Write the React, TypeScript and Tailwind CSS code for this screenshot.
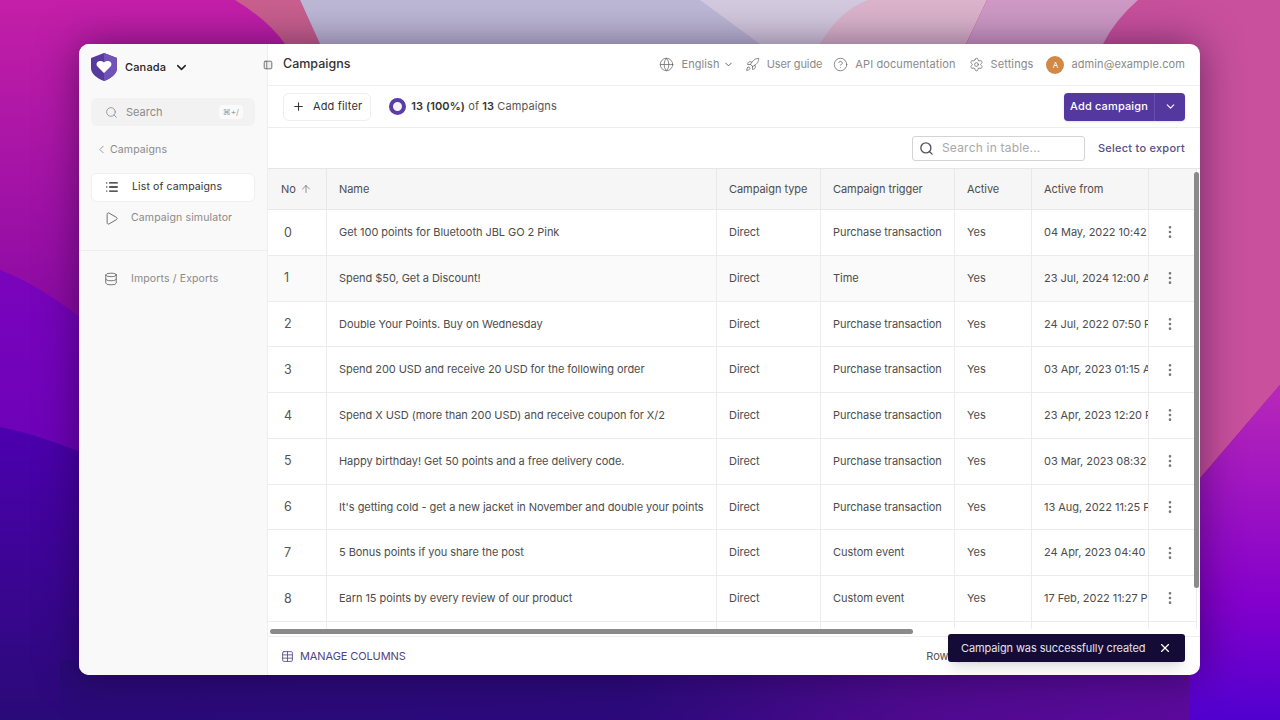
import type { ReactNode } from 'react';
import { ArrowUp, ChevronDown, ChevronLeft, CircleHelp, Database, EllipsisVertical, Globe, List, PanelLeft, Play, Plus, Rocket, Search, Settings, Table, X } from 'lucide-react';

const rows = [
  ['0', 'Get 100 points for Bluetooth JBL GO 2 Pink', 'Purchase transaction', '04 May, 2022 10:42 AM'],
  ['1', 'Spend $50, Get a Discount!', 'Time', '23 Jul, 2024 12:00 AM'],
  ['2', 'Double Your Points. Buy on Wednesday', 'Purchase transaction', '24 Jul, 2022 07:50 PM'],
  ['3', 'Spend 200 USD and receive 20 USD for the following order', 'Purchase transaction', '03 Apr, 2023 01:15 AM'],
  ['4', 'Spend X USD (more than 200 USD) and receive coupon for X/2', 'Purchase transaction', '23 Apr, 2023 12:20 PM'],
  ['5', 'Happy birthday! Get 50 points and a free delivery code.', 'Purchase transaction', '03 Mar, 2023 08:32 PM'],
  ['6', "It's getting cold - get a new jacket in November and double your points", 'Purchase transaction', '13 Aug, 2022 11:25 PM'],
  ['7', '5 Bonus points if you share the post', 'Custom event', '24 Apr, 2023 04:40 PM'],
  ['8', 'Earn 15 points by every review of our product', 'Custom event', '17 Feb, 2022 11:27 PM'],
];

function Wallpaper() {
  return (
    <svg className="absolute inset-0 h-full w-full" viewBox="0 0 1280 720" preserveAspectRatio="none">
      <defs>
        <linearGradient id="top" gradientUnits="userSpaceOnUse" x1="0" y1="0" x2="0" y2="320">
          <stop offset="0" stopColor="#c41fa8" />
          <stop offset="1" stopColor="#8a0aa4" />
        </linearGradient>
        <linearGradient id="mid" gradientUnits="userSpaceOnUse" x1="0" y1="270" x2="0" y2="460">
          <stop offset="0" stopColor="#7a04bc" />
          <stop offset="1" stopColor="#6c02b8" />
        </linearGradient>
        <linearGradient id="low" gradientUnits="userSpaceOnUse" x1="0" y1="430" x2="0" y2="720">
          <stop offset="0" stopColor="#4c00ae" />
          <stop offset="1" stopColor="#2a0a78" />
        </linearGradient>
        <linearGradient id="rightLow" x1="0" y1="0" x2="0" y2="1">
          <stop offset="0" stopColor="#b828b8" />
          <stop offset="0.65" stopColor="#8400cc" />
          <stop offset="1" stopColor="#5000d0" />
        </linearGradient>
        <linearGradient id="bottom" x1="0" y1="0" x2="1" y2="0">
          <stop offset="0" stopColor="#2a0a78" />
          <stop offset="0.5" stopColor="#2c0a7c" />
          <stop offset="0.75" stopColor="#4f0a90" />
          <stop offset="1" stopColor="#5c0a9c" />
        </linearGradient>
      </defs>
      <rect width="1280" height="720" fill="url(#top)" />
      <path d="M0 270 Q40 285 90 325 L700 720 H0 Z" fill="url(#mid)" />
      <path d="M0 427 Q40 435 90 456 L700 720 H0 Z" fill="url(#low)" />
      <rect x="60" y="660" width="1140" height="60" fill="url(#bottom)" />
      <path d="M1100 0 H1280 V385 L1190 490 H1100 Z" fill="#c8509c" />
      <path d="M1190 490 L1280 385 V720 H1190 Z" fill="url(#rightLow)" />
      <path d="M235 0 Q268 20 285 44 H320 L300 0 Z" fill="#c95f8e" />
      <path d="M300 0 H870 L820 44 H320 Z" fill="#bdb8d6" />
      <path d="M700 0 H870 L820 44 H760 Z" fill="#d4cadf" />
      <path d="M868 0 H987 L966 44 H820 Q840 10 868 0 Z" fill="#dcb4cc" />
      <path d="M987 0 H1138 Q1115 20 1103 44 H966 Z" fill="#cf9ac6" />
    </svg>
  );
}

function Shield() {
  return (
    <svg width="26" height="28" viewBox="0 0 26 28">
      <path d="M13 0 L26 5 V15 C26 21 20 25.500 13 28 C6 25.500 0 21 0 15 V5 Z" fill="#563a9e" />
      <path d="M13 0 L26 5 V15 C26 21 20 25.500 13 28 Z" fill="#7052b8" />
      <path d="M13 20 L6 13 C4 9 9 6 13 9.500 C17 6 22 9 20 13 Z" fill="#fff" />
    </svg>
  );
}

function Sidebar() {
  return (
    <aside className="flex w-[189px] shrink-0 flex-col border-r border-[#eeeeee] bg-[#f9f9f9]">
      <div className="flex h-[46px] items-center gap-[8px] pl-[12px]">
        <Shield />
        <span className="text-[11px] font-medium tracking-[0.15px] text-[#222222]">Canada</span>
        <ChevronDown size={15} strokeWidth={2.4} className="text-[#222222]" />
      </div>
      <div className="mx-3 mt-2 flex h-[28px] items-center rounded-md bg-[#f2f2f2] pl-[14px] pr-[12px] text-[#8a8a8a]">
        <Search size={13} strokeWidth={1.5} />
        <span className="ml-[8px] text-[11px]">Search</span>
        <span className="ml-auto rounded-sm bg-[#fafafa] px-[4px] py-[1px] text-[8px] text-[#9a9a9a]">⌘+/</span>
      </div>
      <div className="ml-[16px] mt-[16px] flex items-center gap-[2px] text-[#8a8a8a]">
        <ChevronLeft size={13} strokeWidth={1.6} />
        <span className="text-[10.5px] tracking-[0.13px]">Campaigns</span>
      </div>
      <div className="mx-3 mt-[15px] flex h-[29px] items-center gap-[13px] rounded-md border border-[#f0f0f0] bg-white pl-[13px]">
        <List size={14} strokeWidth={2.4} className="text-[#222222]" />
        <span className="text-[10.5px] tracking-[0.13px] text-[#333333]">List of campaigns</span>
      </div>
      <div className="mx-3 mt-[2px] flex h-[29px] items-center gap-[13px] pl-[13px] text-[#8a8a8a]">
        <Play size={15} strokeWidth={1.5} className="text-[#666666]" />
        <span className="-ml-[1px] text-[10.5px] tracking-[0.13px]">Campaign simulator</span>
      </div>
      <div className="mt-[17px] border-t border-[#eeeeee]" />
      <div className="mx-3 mt-[14px] flex h-[29px] items-center gap-[13px] pl-[13px] text-[#8a8a8a]">
        <Database size={14} strokeWidth={1.5} className="text-[#666666]" />
        <span className="text-[10.5px] tracking-[0.13px]">Imports / Exports</span>
      </div>
    </aside>
  );
}

function TopLink({ icon, label, className }: { icon: ReactNode; label: string; className?: string }) {
  return (
    <div className={`flex items-center gap-[7px] ${className ?? ''}`}>
      {icon}
      <span>{label}</span>
    </div>
  );
}

function TopBar() {
  return (
    <div className="flex h-[42px] shrink-0 items-center border-b border-[#eeeeee] pr-[15px]">
      <PanelLeft size={10} className="-ml-[5px] rounded-sm bg-[#eeeeee] text-[#666666]" />
      <span className="ml-[10px] text-[12.5px] font-medium text-[#333333]">Campaigns</span>
      <div className="ml-auto flex items-center gap-[13px] text-[11px] tracking-[0.1px] text-[#8a8a8a]">
        <div className="flex items-center gap-[7px]">
          <Globe size={15} strokeWidth={1.2} className="text-[#666666]" />
          <span>English</span>
          <ChevronDown size={11} className="-ml-[4px] text-[#555555]" />
        </div>
        <TopLink className="-ml-[2px] tracking-[-0.1px]" icon={<Rocket size={15} strokeWidth={1.2} className="text-[#666666]" />} label="User guide" />
        <TopLink className="-ml-[2px]" icon={<CircleHelp size={15} strokeWidth={1.2} className="text-[#666666]" />} label="API documentation" />
        <TopLink icon={<Settings size={15} strokeWidth={1.2} className="text-[#666666]" />} label="Settings" />
        <div className="flex items-center gap-[7px]">
          <span className="flex h-[18px] w-[18px] items-center justify-center rounded-full bg-[#d08a45] text-[8px] text-white">A</span>
          <span>admin@example.com</span>
        </div>
      </div>
    </div>
  );
}

function FilterBar() {
  return (
    <div className="flex h-[42px] shrink-0 items-center border-b border-[#eeeeee] pl-[15px] pr-[15px]">
      <button className="flex h-[28px] items-center gap-[8px] rounded-md border border-[#eeeeee] bg-white pl-[8px] pr-[8px] text-[11px] tracking-[0.15px] text-[#333333]">
        <Plus size={13} strokeWidth={2} />
        Add filter
      </button>
      <span className="ml-[18px] h-[17px] w-[17px] rounded-full border-[4px] border-[#5b3da6] bg-[#f4f2fa]" />
      <span className="ml-[5px] text-[11px] tracking-[0.1px] text-[#555555]">
        <b className="font-semibold text-[#333333]">13 (100%)</b> of <b className="font-semibold text-[#333333]">13</b> Campaigns
      </span>
      <div className="ml-auto flex h-[28px] items-center rounded-[4px] bg-[#55389f] text-[11px] font-medium tracking-[0.15px] text-white shadow-sm">
        <span className="flex h-full items-center border-r border-[#6a4fb0] px-[6px]">Add campaign</span>
        <span className="flex h-full w-[30px] items-center justify-center">
          <ChevronDown size={13} strokeWidth={2} />
        </span>
      </div>
    </div>
  );
}

function SearchBar() {
  return (
    <div className="flex h-[41px] shrink-0 items-center justify-end gap-[13px] border-b border-[#e6e6e6] pr-[15px]">
      <div className="flex h-[25px] w-[173px] items-center gap-[8px] rounded-[3px] border border-[#d4d4d4] pl-[6px] text-[12px] tracking-[0.2px] text-[#a8a8a8]">
        <Search size={15} strokeWidth={2.2} className="text-[#555555]" />
        Search in table...
      </div>
      <span className="text-[11px] font-medium tracking-[0.25px] text-[#5a4d8a]">Select to export</span>
    </div>
  );
}

function CampaignTable() {
  return (
    <div className="relative min-h-0 flex-1 overflow-hidden">
      <div className="grid grid-cols-[59px_390px_104px_134px_77px_117px_48px] text-[11px] tracking-[-0.05px] text-[#4d4d4d]">
        <div className="flex h-[41px] items-center gap-[4px] border-b border-r border-[#e8e8e8] bg-[#f6f6f6] pl-[13px]">
          No <ArrowUp size={12} strokeWidth={1.2} />
        </div>
        {['Name', 'Campaign type', 'Campaign trigger', 'Active', 'Active from', ''].map((h) => (
          <div key={h} className="flex h-[41px] items-center border-b border-r border-[#e8e8e8] bg-[#f6f6f6] pl-[12px]">
            {h}
          </div>
        ))}
        {rows.map((r, i) => {
          const bg = i === 1 ? 'bg-[#fafafa]' : 'bg-white';
          const cell = `flex h-[45.75px] items-center overflow-hidden whitespace-nowrap border-b border-r border-[#ececec] pl-[12px] ${bg}`;
          return [
            <div key={`${i}no`} className={`${cell} !pl-[16px] pt-[1px] text-[12.5px] text-[#555555]`}>{r[0]}</div>,
            <div key={`${i}name`} className={cell}>{r[1]}</div>,
            <div key={`${i}type`} className={cell}>Direct</div>,
            <div key={`${i}trigger`} className={cell}>{r[2]}</div>,
            <div key={`${i}active`} className={cell}>Yes</div>,
            <div key={`${i}from`} className={cell}>{r[3]}</div>,
            <div key={`${i}menu`} className={`${cell} !pl-[13px]`}><EllipsisVertical size={16} strokeWidth={2} className="text-[#777777]" /></div>,
          ];
        })}
        {['a', 'b', 'c', 'd', 'e', 'f', 'g'].map((k) => (
          <div key={k} className="h-[20px] border-r border-[#ececec]" />
        ))}
      </div>
      <div className="absolute right-[1px] top-[3px] h-[416px] w-[5px] rounded-full bg-[#8a8a8a]" />
      <div className="absolute inset-x-0 bottom-0 h-[7px] bg-white" />
      <div className="absolute bottom-[2px] left-[2px] h-[5px] w-[643px] rounded-full bg-[#8a8a8a]" />
    </div>
  );
}

function Toast() {
  return (
    <div className="absolute bottom-[13px] right-[15px] flex h-[28px] w-[237px] items-center justify-between whitespace-nowrap rounded-[3px] bg-[#140b36] pl-[13px] pr-[13px] text-[11px] tracking-[-0.1px] text-[#e4e2ee] shadow-lg">
      Campaign was successfully created
      <X size={14} strokeWidth={2} className="text-white" />
    </div>
  );
}

export default function App() {
  return (
    <div className="relative h-[720px] w-[1280px] overflow-hidden pl-[79px] pt-[44px]" style={{ fontFamily: 'Inter, sans-serif' }}>
      <Wallpaper />
      <div className="relative flex h-[631px] w-[1121px] rounded-[10px] bg-white shadow-[0_0_40px_rgba(20,0,40,0.5)]">
        <div className="flex w-full overflow-hidden rounded-[10px]">
          <Sidebar />
          <main className="relative flex min-w-0 flex-1 flex-col">
            <TopBar />
            <FilterBar />
            <SearchBar />
            <CampaignTable />
            <div className="flex h-[39px] shrink-0 items-center gap-[6px] border-t border-[#eeeeee] pl-[13px] pt-[1px] text-[#4f4380]">
              <Table size={13} strokeWidth={1.5} />
              <span className="text-[11px] tracking-[-0.1px]">MANAGE COLUMNS</span>
              <span className="ml-auto mr-[196px] text-[11px] text-[#555555]">Rows per page</span>
            </div>
            <Toast />
          </main>
        </div>
      </div>
    </div>
  );
}
